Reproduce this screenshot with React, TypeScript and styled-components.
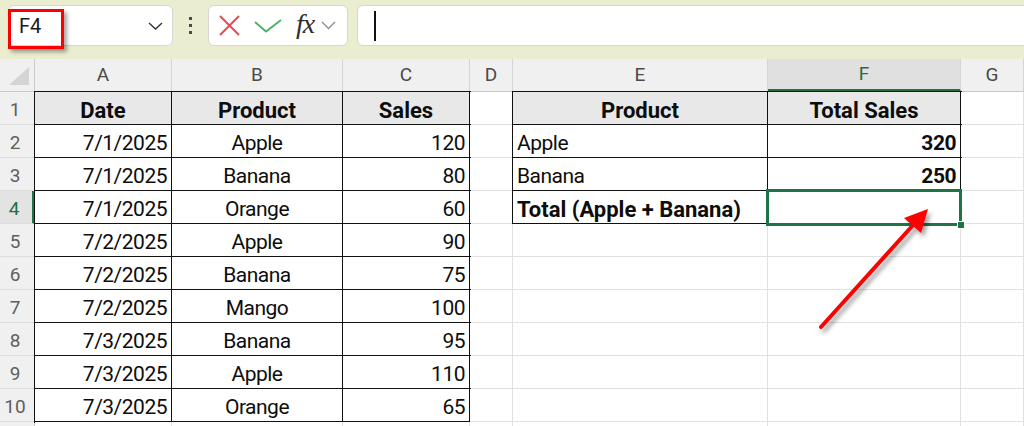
import styled, { createGlobalStyle } from 'styled-components'

type Align = 'left' | 'center' | 'right'

interface CellData {
  text?: string
  align?: Align
  bold?: boolean
  wide?: boolean
  head?: boolean
  table?: boolean
  selected?: boolean
}

const columns = ['A', 'B', 'C', 'D', 'E', 'F', 'G']
const activeColumn = 'F'
const activeRow = 4
const visibleRows = 10

const sales = [
  ['7/1/2025', 'Apple', '120'],
  ['7/1/2025', 'Banana', '80'],
  ['7/1/2025', 'Orange', '60'],
  ['7/2/2025', 'Apple', '90'],
  ['7/2/2025', 'Banana', '75'],
  ['7/2/2025', 'Mango', '100'],
  ['7/3/2025', 'Banana', '95'],
  ['7/3/2025', 'Apple', '110'],
  ['7/3/2025', 'Orange', '65'],
]

const summary: CellData[][] = [
  [
    { text: 'Product', align: 'center', bold: true, wide: true, head: true, table: true },
    { text: 'Total Sales', align: 'center', bold: true, wide: true, head: true, table: true },
  ],
  [
    { text: 'Apple', align: 'left', table: true },
    { text: '320', align: 'right', bold: true, table: true },
  ],
  [
    { text: 'Banana', align: 'left', table: true },
    { text: '250', align: 'right', bold: true, table: true },
  ],
  [
    { text: 'Total (Apple + Banana)', align: 'left', bold: true, wide: true, table: true },
    { table: true, selected: true },
  ],
]

function buildRow(index: number): CellData[] {
  let left: CellData[] = [{}, {}, {}]
  if (index === 0) {
    left = ['Date', 'Product', 'Sales'].map((text) => ({
      text,
      align: 'center' as Align,
      bold: true,
      wide: true,
      head: true,
      table: true,
    }))
  } else if (sales[index - 1]) {
    const [date, product, amount] = sales[index - 1]
    left = [
      { text: date, align: 'right', table: true },
      { text: product, align: 'center', table: true },
      { text: amount, align: 'right', table: true },
    ]
  }
  const right = summary[index] ?? [{}, {}]
  return [...left, {}, ...right, {}]
}

// one extra row peeks in at the bottom edge of the window
const rows = Array.from({ length: visibleRows + 1 }, (_, i) => buildRow(i))

export default function App() {
  return (
    <Page>
      <GlobalStyle />
      <Toolbar>
        <NameBox>
          <NameText>F4</NameText>
          <svg width="15" height="8" viewBox="0 0 15 8">
            <polyline points="1,1 7.5,7 14,1" fill="none" stroke="#333" strokeWidth="1.4" />
          </svg>
          <Highlight />
        </NameBox>
        <Kebab>
          <Dot />
          <Dot />
          <Dot />
        </Kebab>
        <FxGroup>
          <svg width="21" height="21" viewBox="0 0 21 21">
            <path d="M1 1 L20 20 M20 1 L1 20" stroke="#ea4a52" strokeWidth="2" fill="none" />
          </svg>
          <svg width="28" height="14" viewBox="0 0 28 14">
            <polyline points="1,3 12,12.5 27,1" fill="none" stroke="#4aaf63" strokeWidth="1.8" />
          </svg>
          <FxText>fx</FxText>
          <SmallChevron width="15" height="9" viewBox="0 0 15 9">
            <polyline points="1,1 7.5,7.5 14,1" fill="none" stroke="#8c8c8c" strokeWidth="1.3" />
          </SmallChevron>
        </FxGroup>
        <FormulaInput>
          <Caret />
        </FormulaInput>
      </Toolbar>

      <Sheet>
        <Corner>
          <svg width="20" height="18" viewBox="0 0 20 18">
            <polygon points="20,0 20,18 0,18" fill="#d4d4d4" />
          </svg>
        </Corner>
        {columns.map((col) => (
          <ColHeader key={col} $active={col === activeColumn}>
            {col}
          </ColHeader>
        ))}

        {rows.map((cells, i) => (
          <Row key={i} cells={cells} num={i + 1} />
        ))}
      </Sheet>

      <Arrow width="1024" height="426" viewBox="0 0 1024 426">
        <defs>
          <filter id="arrowShadow" x="-20%" y="-20%" width="150%" height="150%">
            <feDropShadow dx="3" dy="4" stdDeviation="2" floodColor="#000" floodOpacity="0.35" />
          </filter>
        </defs>
        <g filter="url(#arrowShadow)">
          <line x1="821" y1="327" x2="914" y2="224" stroke="#ff0000" strokeWidth="4" strokeLinecap="round" />
          <polygon points="928,209 921,233 904,218" fill="#ff0000" />
        </g>
      </Arrow>
    </Page>
  )
}

function Row({ cells, num }: { cells: CellData[]; num: number }) {
  return (
    <>
      <RowHeader $active={num === activeRow}>{num <= visibleRows ? num : null}</RowHeader>
      {cells.map((cell, c) => (
        <Cell
          key={c}
          $align={cell.align ?? 'left'}
          $bold={!!cell.bold}
          $wide={!!cell.wide}
          $head={!!cell.head}
          $table={!!cell.table}
        >
          {cell.text}
          {cell.selected && (
            <Selection>
              <Handle />
            </Selection>
          )}
        </Cell>
      ))}
    </>
  )
}

const GlobalStyle = createGlobalStyle`
  * {
    box-sizing: border-box;
  }

  html, body {
    margin: 0;
    padding: 0;
    background: #ffffff;
  }

  body {
    font-family: Roboto, 'Liberation Sans', sans-serif;
    overflow: hidden;
  }
`

const Page = styled.div`
  position: relative;
  width: 1024px;
  height: 426px;
  overflow: hidden;
`

const Toolbar = styled.div`
  display: flex;
  align-items: flex-start;
  height: 59px;
  padding: 5px 0 0 8px;
  background: #ebedd1;
`

const NameBox = styled.div`
  position: relative;
  display: flex;
  align-items: center;
  justify-content: space-between;
  width: 165px;
  height: 41px;
  padding: 0 9px 0 10px;
  background: #ffffff;
  border: 1px solid #d6d6d6;
  border-radius: 6px;
`

const NameText = styled.span`
  font-size: 20px;
  color: #1a1a1a;
`

const Highlight = styled.div`
  position: absolute;
  left: -1px;
  top: 3px;
  width: 56px;
  height: 40px;
  border: 3px solid #ff0000;
  box-shadow: 3px 3px 4px rgba(0, 0, 0, 0.35);
`

const Kebab = styled.div`
  display: flex;
  flex-direction: column;
  align-items: center;
  gap: 4px;
  width: 35px;
  height: 41px;
  justify-content: center;
`

const Dot = styled.span`
  width: 3px;
  height: 3px;
  background: #4a4a4a;
`

const FxGroup = styled.div`
  display: flex;
  align-items: center;
  gap: 14px;
  width: 140px;
  height: 41px;
  padding-left: 10px;
  background: #ffffff;
  border: 1px solid #d6d6d6;
  border-radius: 6px;
`

const FxText = styled.span`
  font-family: 'Liberation Serif', 'DejaVu Serif', serif;
  font-style: italic;
  font-size: 28px;
  color: #2e2e2e;
  letter-spacing: -1px;
  margin-top: -3px;
`

const SmallChevron = styled.svg`
  margin-left: -7px;
`

const FormulaInput = styled.div`
  flex: 1;
  display: flex;
  align-items: center;
  height: 41px;
  margin: 0 -20px 0 9px;
  padding-left: 16px;
  background: #ffffff;
  border: 1px solid #d6d6d6;
  border-radius: 6px;
`

const Caret = styled.span`
  width: 1.5px;
  height: 30px;
  background: #111111;
`

const Sheet = styled.div`
  display: grid;
  grid-template-columns: 35px 137px 171px 127px 43px 255px 193px 1fr;
  grid-auto-rows: 33px;
`

const Corner = styled.div`
  display: flex;
  align-items: flex-end;
  justify-content: flex-end;
  padding: 0 5px 6px 0;
  background: #f0f0f0;
  border-right: 1px solid #c9c9c9;
  border-bottom: 1px solid #c9c9c9;
`

const ColHeader = styled.div<{ $active: boolean }>`
  display: flex;
  align-items: center;
  justify-content: center;
  padding-bottom: 2px;
  font-size: 19px;
  color: ${({ $active }) => ($active ? '#1e7145' : '#4a4a4a')};
  background: ${({ $active }) => ($active ? '#e0e0e0' : '#f0f0f0')};
  border-right: 1px solid #d4d4d4;
  border-bottom: ${({ $active }) => ($active ? '3px solid #217346' : '1px solid #c9c9c9')};
`

const RowHeader = styled.div<{ $active: boolean }>`
  display: flex;
  align-items: center;
  justify-content: center;
  padding: 3px 4px 0 0;
  font-size: 19px;
  color: ${({ $active }) => ($active ? '#1e7145' : '#5f5f5f')};
  background: ${({ $active }) => ($active ? '#e3e3e3' : '#f0f0f0')};
  border-right: ${({ $active }) => ($active ? '3px solid #217346' : '1px solid #c9c9c9')};
  border-bottom: 1px solid #dcdcdc;
`

const justify: Record<Align, string> = {
  left: 'flex-start',
  center: 'center',
  right: 'flex-end',
}

const Cell = styled.div<{
  $align: Align
  $bold: boolean
  $wide: boolean
  $head: boolean
  $table: boolean
}>`
  position: relative;
  display: flex;
  align-items: center;
  justify-content: ${({ $align }) => justify[$align]};
  padding: 4px 4px 0 4px;
  font-size: ${({ $wide }) => ($wide ? '22px' : '21px')};
  letter-spacing: ${({ $wide }) => ($wide ? '0' : '-0.5px')};
  white-space: nowrap;
  font-weight: ${({ $bold }) => ($bold ? 700 : 400)};
  color: #0d0d0d;
  background: ${({ $head }) => ($head ? '#e8e8e8' : '#ffffff')};
  border-right: 1px solid ${({ $table }) => ($table ? '#111111' : '#e1e1e1')};
  border-bottom: 1px solid ${({ $table }) => ($table ? '#111111' : '#e1e1e1')};
  outline: ${({ $table }) => ($table ? '1px solid #111111' : 'none')};
`

const Selection = styled.div`
  position: absolute;
  z-index: 2;
  left: -2px;
  right: -2px;
  top: -2px;
  bottom: -3px;
  border: 3px solid #217346;
`

const Handle = styled.span`
  position: absolute;
  right: -6px;
  bottom: -6px;
  width: 8px;
  height: 8px;
  background: #217346;
  border: 1px solid #ffffff;
`

const Arrow = styled.svg`
  position: absolute;
  left: 0;
  top: 0;
  pointer-events: none;
  z-index: 3;
`
